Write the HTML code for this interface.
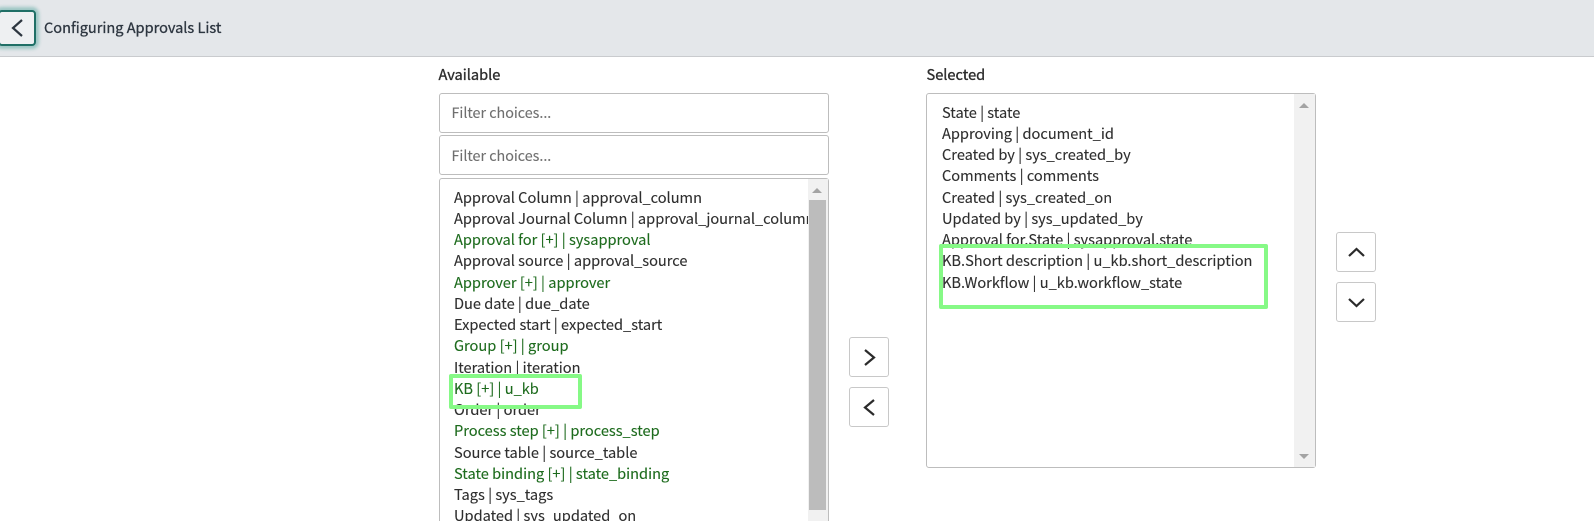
<!DOCTYPE html>
<html>
<head>
<meta charset="utf-8">
<style>
html,body{margin:0;padding:0;width:1594px;height:521px;overflow:hidden;background:#fff;}
body{position:relative;font-family:"Noto Sans CJK SC","Liberation Sans",sans-serif;font-size:14.6px;color:#2e2e2e;-webkit-text-stroke:.12px currentColor;}
div{position:absolute;box-sizing:border-box;}
.hdr{left:0;top:0;width:1594px;height:57px;background:#e4e7ea;border-bottom:1px solid #c9cbce;}
.back{left:-2px;top:10px;width:38px;height:36px;background:#eef0f2;border:2px solid #1f6f66;border-radius:4px;box-shadow:0 0 3px 3px rgba(70,160,150,.45);}
.t{white-space:nowrap;line-height:22px;height:22px;}
.title{left:44px;top:17px;font-size:14.55px;color:#2d3640;-webkit-text-stroke:.3px currentColor;}
.lbl{font-size:14.6px;color:#2e2e2e;top:64px;-webkit-text-stroke:.35px currentColor;}
.inp{left:439px;width:390px;background:#fff;border:1px solid #bdbdbd;border-radius:3px;}
.ph{left:451.5px;color:#6f6f6f;font-size:14.3px;}
.box{background:#fff;border:1px solid #bdbdbd;border-radius:3px;}
.clip{overflow:hidden;}
.g{color:#1d6b1d;}
.track{background:#f1f1f1;}
.thumb{background:#bcbcbc;}
.up{width:0;height:0;border-left:5px solid transparent;border-right:5px solid transparent;border-bottom:5px solid #a3a3a3;}
.dn{width:0;height:0;border-left:5px solid transparent;border-right:5px solid transparent;border-top:5px solid #a3a3a3;}
.btn{width:40px;height:40px;background:#fff;border:1px solid #c8c8c8;border-radius:3px;}
.hl{border:4px solid #86f986;border-radius:2px;}
svg{position:absolute;left:0;top:0;}
</style>
</head>
<body>
<div class="hdr"></div>
<div class="back"></div>
<svg width="36" height="56" style="left:0;top:0"><path d="M22 20 L13 28 L22 36" fill="none" stroke="#2d3640" stroke-width="2.2"/></svg>
<div class="t title">Configuring Approvals List</div>

<div class="t lbl" style="left:438.5px">Available</div>
<div class="inp" style="top:93px;height:40px"></div>
<div class="t ph" style="top:102px">Filter choices...</div>
<div class="inp" style="top:135px;height:40px"></div>
<div class="t ph" style="top:145px">Filter choices...</div>

<div class="box" style="left:439px;top:178px;width:390px;height:360px"></div>
<div class="clip" style="left:440px;top:179px;width:368px;height:342px">
<div class="t" style="left:14px;top:8px">Approval Column | approval_column</div>
<div class="t" style="left:14px;top:29px">Approval Journal Column | approval_journal_column</div>
<div class="t g" style="left:14px;top:50px">Approval for [+] | sysapproval</div>
<div class="t" style="left:14px;top:71px">Approval source | approval_source</div>
<div class="t g" style="left:14px;top:93px">Approver [+] | approver</div>
<div class="t" style="left:14px;top:114px">Due date | due_date</div>
<div class="t" style="left:14px;top:135px">Expected start | expected_start</div>
<div class="t g" style="left:14px;top:156px">Group [+] | group</div>
<div class="t" style="left:14px;top:178px">Iteration | iteration</div>
<div class="t g" style="left:14px;top:199px">KB [+] | u_kb</div>
<div class="t" style="left:14px;top:220px">Order | order</div>
<div class="t g" style="left:14px;top:241px">Process step [+] | process_step</div>
<div class="t" style="left:14px;top:263px">Source table | source_table</div>
<div class="t g" style="left:14px;top:284px">State binding [+] | state_binding</div>
<div class="t" style="left:14px;top:305px">Tags | sys_tags</div>
<div class="t" style="left:14px;top:326px">Updated | sys_updated_on</div>
</div>
<div class="track" style="left:808px;top:179px;width:20px;height:342px"></div>
<div class="up" style="left:812px;top:188px"></div>
<div class="thumb" style="left:809px;top:200px;width:17px;height:310px"></div>
<div class="hl" style="left:449px;top:374px;width:133px;height:35px"></div>

<div class="btn" style="left:849px;top:337px"></div>
<div class="btn" style="left:849px;top:387px"></div>
<svg width="1594" height="521" style="pointer-events:none">
<path d="M865 350 L874 357.5 L865 365" fill="none" stroke="#2b2b2b" stroke-width="2.2"/>
<path d="M874 400 L865 407.5 L874 415" fill="none" stroke="#2b2b2b" stroke-width="2.2"/>
</svg>

<div class="t lbl" style="left:926.5px">Selected</div>
<div class="box" style="left:926px;top:93px;width:390px;height:375px"></div>
<div class="clip" style="left:927px;top:94px;width:367px;height:373px">
<div class="t" style="left:15px;top:8px">State | state</div>
<div class="t" style="left:15px;top:29px">Approving | document_id</div>
<div class="t" style="left:15px;top:50px">Created by | sys_created_by</div>
<div class="t" style="left:15px;top:71px">Comments | comments</div>
<div class="t" style="left:15px;top:93px">Created | sys_created_on</div>
<div class="t" style="left:15px;top:114px">Updated by | sys_updated_by</div>
<div class="t" style="left:15px;top:135px">Approval for.State | sysapproval.state</div>
<div class="t" style="left:15px;top:156px">KB.Short description | u_kb.short_description</div>
<div class="t" style="left:15px;top:178px">KB.Workflow | u_kb.workflow_state</div>
</div>
<div class="track" style="left:1294px;top:94px;width:21px;height:373px"></div>
<div class="up" style="left:1299px;top:103px"></div>
<div class="dn" style="left:1299px;top:454px"></div>
<div class="hl" style="left:939px;top:244px;width:329px;height:65px"></div>

<div class="btn" style="left:1336px;top:232px"></div>
<div class="btn" style="left:1336px;top:282px"></div>
<svg width="1594" height="521" style="pointer-events:none">
<path d="M1349 256 L1356.5 249 L1364 256" fill="none" stroke="#2b2b2b" stroke-width="2.2"/>
<path d="M1349 299 L1356.5 306 L1364 299" fill="none" stroke="#2b2b2b" stroke-width="2.2"/>
</svg>
</body>
</html>
